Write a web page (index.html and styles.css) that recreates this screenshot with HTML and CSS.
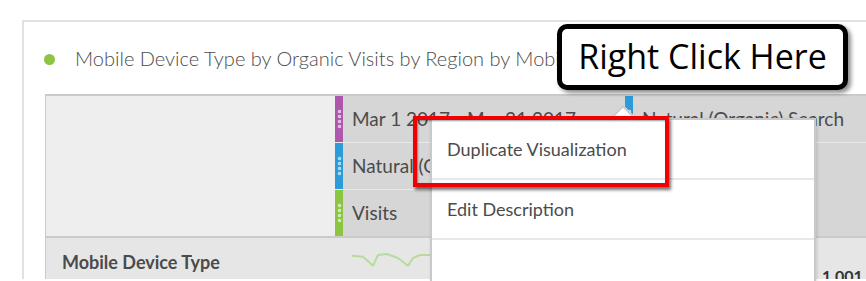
FILE: index.html
```html
<!DOCTYPE html>
<html lang="en">
<head>
    <meta charset="UTF-8">
    <title>Freeform Table</title>
    <link rel="stylesheet" href="styles.css">
</head>
<body>
    <div class="panel">
        <div class="panel-title">
            <span class="status-dot"></span>
            <span class="title-text">Mobile Device Type by Organic Visits by Region by Mobile Device Type</span>
        </div>

        <div class="freeform">
            <div class="head">
                <div class="head-blank"></div>
                <div class="head-cell">
                    <span class="bar bar-purple"><i></i></span>
                    <span class="head-label">Mar 1 2017 - Mar 31 2017</span>
                </div>
                <div class="head-cell">
                    <span class="bar bar-blue"><i></i></span>
                    <span class="head-label">Natural (Organic) Search</span>
                </div>
                <div class="head-cell">
                    <span class="bar bar-blue"><i></i></span>
                    <span class="head-label">Natural (Organic) Search</span>
                </div>
                <div class="head-cell head-tall"></div>
                <div class="head-cell">
                    <span class="bar bar-green"><i></i></span>
                    <span class="head-label">Visits</span>
                </div>
            </div>

            <div class="row">
                <div class="row-label">Mobile Device Type</div>
                <div class="row-spark">
                    <svg width="80" height="20" viewBox="0 0 80 20">
                        <polyline points="0,5.7 11,6.7 21,15.7 26,5 35,4 46,8 56,15.7 61,8 68,5 78,5" fill="none" stroke="#b8db9c" stroke-width="2" stroke-linejoin="round"/>
                    </svg>
                </div>
                <div class="row-value">1,001,9</div>
            </div>
        </div>
    </div>

    <!-- right-click menu -->
    <div class="context-menu">
        <div class="menu-item">Duplicate Visualization</div>
        <div class="menu-item">Edit Description</div>
        <div class="menu-item"></div>
    </div>

    <div class="highlight-box"></div>

    <div class="callout">Right Click Here</div>
</body>
</html>
```

FILE: styles.css
```css
* {
    margin: 0;
    padding: 0;
    box-sizing: border-box;
}

body {
    font-family: Lato, 'Open Sans', Arial, sans-serif;
    color: #4b4b4b;
    background: white;
    overflow: hidden;
    position: relative;
    height: 281px;
}

.panel {
    margin: 20px 0 0 22px;
    border-top: 2px solid #e1e1e1;
    border-left: 2px solid #e1e1e1;
    padding: 24px 0 0 20px;
}

.panel-title {
    display: flex;
    align-items: center;
    gap: 20px;
    height: 24px;
    white-space: nowrap;
}

.status-dot {
    width: 11px;
    height: 11px;
    border-radius: 50%;
    background: #8cc541;
    margin-top: 3px;
    flex-shrink: 0;
}

.title-text {
    font-size: 20px;
    font-weight: 300;
    line-height: 24px;
    color: #4b4b4b;
}

.freeform {
    margin: 24px 0 0 1px;
    border-top: 2px solid #cacaca;
    border-left: 1px solid #cacaca;
}

.head {
    display: grid;
    grid-template-columns: 289px 290px 1fr;
    grid-template-rows: 46px 46px 46px;
    row-gap: 1px;
    background: #e9e9e9;
}

.head-blank {
    grid-row: 1 / 4;
    background: #eeeeee;
}

.head-cell {
    display: flex;
    align-items: stretch;
    background: #d6d6d6;
    white-space: nowrap;
    overflow: hidden;
}

.head-tall {
    grid-row: 2 / 4;
    grid-column: 3;
}

.bar {
    width: 8px;
    flex-shrink: 0;
    display: flex;
    align-items: center;
    justify-content: center;
}

.bar i {
    display: block;
    width: 5px;
    height: 20px;
    background: radial-gradient(circle, rgba(255,255,255,0.6) 1.6px, transparent 2.1px) center top / 5px 5px repeat-y;
}

.bar-purple { background: #ad58ad; }
.bar-blue { background: #2c9bd9; }
.bar-green { background: #8cc541; }

.head-label {
    font-size: 19px;
    line-height: 46px;
    padding-left: 9px;
    color: #4b4b4b;
}

.row {
    display: grid;
    grid-template-columns: 289px 290px 1fr;
    border-top: 2px solid #cacaca;
    background: #e6e6e6;
    height: 43px;
}

.row-label {
    font-size: 18px;
    font-weight: bold;
    line-height: 22px;
    padding: 13px 0 0 16px;
    color: #4b4b4b;
}

.row-spark {
    padding: 12px 0 0 17px;
}

.row-value {
    font-size: 16px;
    font-weight: bold;
    line-height: 20px;
    padding: 28px 0 0 197px;
    color: #333;
    white-space: nowrap;
    overflow: hidden;
}

.context-menu {
    position: absolute;
    left: 430px;
    top: 118px;
    width: 386px;
    height: 163px;
    background: white;
    border: 2px solid #c9c9c9;
    border-bottom: none;
    box-shadow: 1px 1px 3px rgba(0,0,0,0.15);
}

.context-menu::before {
    content: "";
    position: absolute;
    left: 181px;
    top: -11px;
    width: 18px;
    height: 18px;
    background: white;
    border-top: 2px solid #c9c9c9;
    border-left: 2px solid #c9c9c9;
    transform: rotate(45deg);
}

.menu-item {
    position: relative;
    height: 58px;
    line-height: 58px;
    padding-left: 15px;
    font-size: 18px;
    color: #4b4b4b;
    border-bottom: 2px solid #e8e8e8;
    box-sizing: content-box;
}

.menu-item:last-child {
    height: 39px;
    border-bottom: none;
}

.highlight-box {
    position: absolute;
    left: 413px;
    top: 116px;
    width: 256px;
    height: 71px;
    border: 4px solid #f00000;
    box-shadow: 2px 3px 3px rgba(0,0,0,0.55), inset 1px 1px 2px rgba(0,0,0,0.4);
}

.callout {
    position: absolute;
    left: 557px;
    top: 24px;
    width: 291px;
    height: 66px;
    border: 5px solid #000;
    border-radius: 10px;
    background: white;
    box-shadow: 3px 3px 4px rgba(0,0,0,0.45);
    font-family: 'Open Sans', 'Noto Sans', sans-serif;
    font-size: 34px;
    line-height: 54px;
    text-align: center;
    color: #000;
}
```
